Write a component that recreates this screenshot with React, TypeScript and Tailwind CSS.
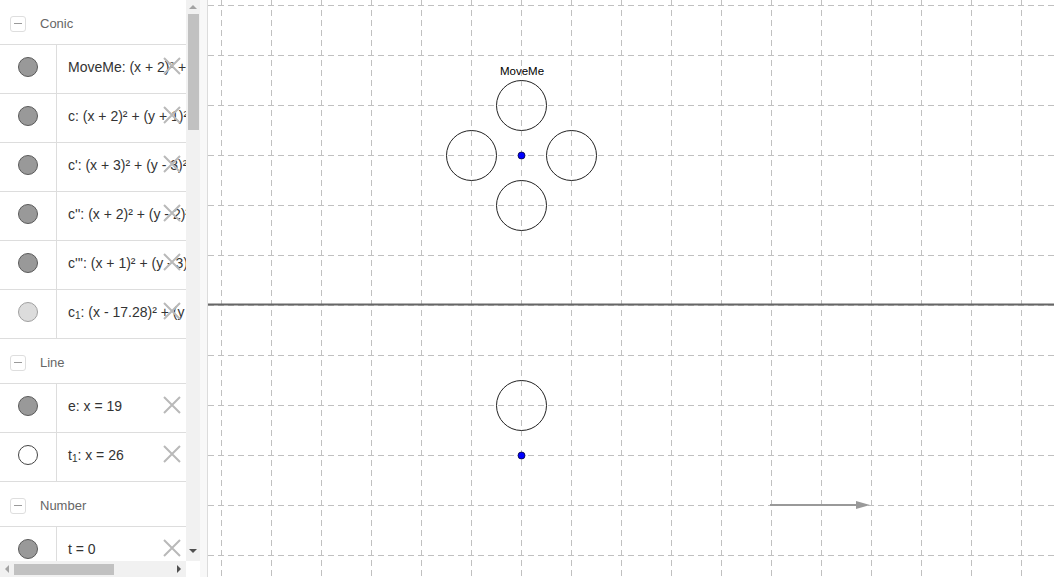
import React from 'react';

type Item = { label: React.ReactNode; dot: 'dark' | 'light' | 'empty' };
type Group = { title: string; items: Item[] };

const groups: Group[] = [
  {
    title: 'Conic',
    items: [
      { label: <>MoveMe: (x + 2)² + (y - 3)² = 1</>, dot: 'dark' },
      { label: <>c: (x + 2)² + (y + 1)² = 1</>, dot: 'dark' },
      { label: <>c': (x + 3)² + (y - 3)² = 1</>, dot: 'dark' },
      { label: <>c'': (x + 2)² + (y - 2)² = 1</>, dot: 'dark' },
      { label: <>c''': (x + 1)² + (y - 3)² = 1</>, dot: 'dark' },
      { label: <>c<sub className="text-[10px]">1</sub>: (x - 17.28)² + (y - 2)² = 1</>, dot: 'light' },
    ],
  },
  {
    title: 'Line',
    items: [
      { label: <>e: x = 19</>, dot: 'dark' },
      { label: <>t<sub className="text-[10px]">1</sub>: x = 26</>, dot: 'empty' },
    ],
  },
  {
    title: 'Number',
    items: [{ label: <>t = 0</>, dot: 'dark' }],
  },
];

const dotClass = {
  dark: 'bg-[#999999] border-[#5a5a5a]',
  light: 'bg-[#dcdcdc] border-[#a0a0a0]',
  empty: 'bg-white border-[#444444]',
};

function DeleteIcon() {
  return (
    <svg width="18" height="18" viewBox="0 0 18 18" className="shrink-0">
      <path d="M1 1 L17 17 M17 1 L1 17" stroke="#b9b9b9" strokeWidth="2" fill="none" />
    </svg>
  );
}

function Header({ title }: { title: string }) {
  return (
    <div className="h-[45px] border-b border-[#dddddd] flex items-center shrink-0 pt-[3px]">
      <div className="ml-[10px] w-[16px] h-[16px] border border-[#dedede] rounded-[3px] flex items-center justify-center">
        <div className="w-[8px] h-[1.5px] bg-[#9a9a9a]" />
      </div>
      <span className="ml-[14px] text-[13px] text-[#666666]">{title}</span>
    </div>
  );
}

function Row({ item }: { item: Item }) {
  return (
    <div className="h-[49px] border-b border-[#dddddd] flex shrink-0">
      <div className="w-[57px] border-r border-[#dddddd] flex items-center justify-center shrink-0 pb-[5px]">
        <div className={`w-[20px] h-[20px] rounded-full border ${dotClass[item.dot]}`} />
      </div>
      <div className="relative flex-1 overflow-hidden flex items-center pb-[4px]">
        <span className="ml-[11px] whitespace-nowrap text-[14px] text-[#333333]">{item.label}</span>
        <div className="absolute right-[5px] top-[12px]">
          <DeleteIcon />
        </div>
      </div>
    </div>
  );
}

function Graphics() {
  const w = 848;
  const h = 577;
  const ox = 209;
  const xs = Array.from({ length: 17 }, (_, i) => 222 - ox + i * 50);
  const ys = Array.from({ length: 12 }, (_, i) => 5 + i * 50);
  const circles = [
    [522, 105],
    [472, 155],
    [572, 155],
    [522, 205],
    [522, 405],
  ];
  return (
    <svg width={w} height={h} className="block">
      {xs.map((x) => (
        <line key={'v' + x} x1={x + 0.5} y1={0} x2={x + 0.5} y2={h} stroke="#c0c0c0" strokeWidth="1" strokeDasharray="6 4" />
      ))}
      {ys.map((y) => (
        <line key={'h' + y} x1={0} y1={y + 0.5} x2={w} y2={y + 0.5} stroke="#c0c0c0" strokeWidth="1" strokeDasharray="6 4" />
      ))}
      <line x1={0} y1={304.5} x2={846} y2={304.5} stroke="#666666" strokeWidth="2" />
      {circles.map(([cx, cy]) => (
        <circle key={cx + '-' + cy} cx={cx - ox + 0.5} cy={cy + 0.5} r={25} fill="none" stroke="#222222" strokeWidth="1" />
      ))}
      <circle cx={522 - ox + 0.5} cy={155.5} r={3.5} fill="#0000ff" stroke="#000033" strokeWidth="0.8" />
      <circle cx={522 - ox + 0.5} cy={455.5} r={3.5} fill="#0000ff" stroke="#000033" strokeWidth="0.8" />
      <text x={501 - ox} y={75} fontSize="11.5" fill="#000" fontFamily="'Liberation Sans', Arial, sans-serif">
        MoveMe
      </text>
      <line x1={771 - ox} y1={505} x2={860 - ox} y2={505} stroke="#999999" strokeWidth="2" />
      <polygon points={`${857 - ox},501 ${871 - ox},505 ${857 - ox},509`} fill="#999999" />
    </svg>
  );
}

export default function App() {
  return (
    <div className="w-[1057px] h-[577px] flex bg-white overflow-hidden" style={{ fontFamily: "'Liberation Sans', Arial, sans-serif" }}>
      <div className="w-[200px] h-full flex flex-col shrink-0">
        <div className="flex h-[561px]">
          <div className="w-[186px] h-full overflow-hidden flex flex-col">
            {groups.map((g) => (
              <React.Fragment key={g.title}>
                <Header title={g.title} />
                {g.items.map((it, i) => (
                  <Row key={i} item={it} />
                ))}
              </React.Fragment>
            ))}
          </div>
          <div className="w-[14px] h-full bg-[#f1f1f1] flex flex-col items-center">
            <div className="h-[14px] flex items-center justify-center">
              <div className="w-0 h-0 border-l-[4px] border-r-[4px] border-b-[4px] border-l-transparent border-r-transparent border-b-[#a3a3a3]" />
            </div>
            <div className="w-[11px] h-[116px] bg-[#c1c1c1]" />
            <div className="flex-1" />
            <div className="h-[20px] flex items-center justify-center">
              <div className="w-0 h-0 border-l-[4px] border-r-[4px] border-t-[4px] border-l-transparent border-r-transparent border-t-[#505050]" />
            </div>
          </div>
        </div>
        <div className="flex h-[16px]">
          <div className="w-[186px] h-full bg-[#f1f1f1] flex items-center">
            <div className="w-[14px] flex items-center justify-center">
              <div className="w-0 h-0 border-t-[4px] border-b-[4px] border-r-[4px] border-t-transparent border-b-transparent border-r-[#a3a3a3]" />
            </div>
            <div className="w-[100px] h-[11px] bg-[#c1c1c1]" />
            <div className="flex-1" />
            <div className="w-[14px] flex items-center justify-center">
              <div className="w-0 h-0 border-t-[4px] border-b-[4px] border-l-[4px] border-t-transparent border-b-transparent border-l-[#505050]" />
            </div>
          </div>
          <div className="w-[14px] h-full bg-white" />
        </div>
      </div>
      <div className="w-[8px] h-full bg-[#f8f8f8] border-r border-[#dcdcdc] shrink-0" />
      <div className="flex-1 h-full">
        <Graphics />
      </div>
    </div>
  );
}
